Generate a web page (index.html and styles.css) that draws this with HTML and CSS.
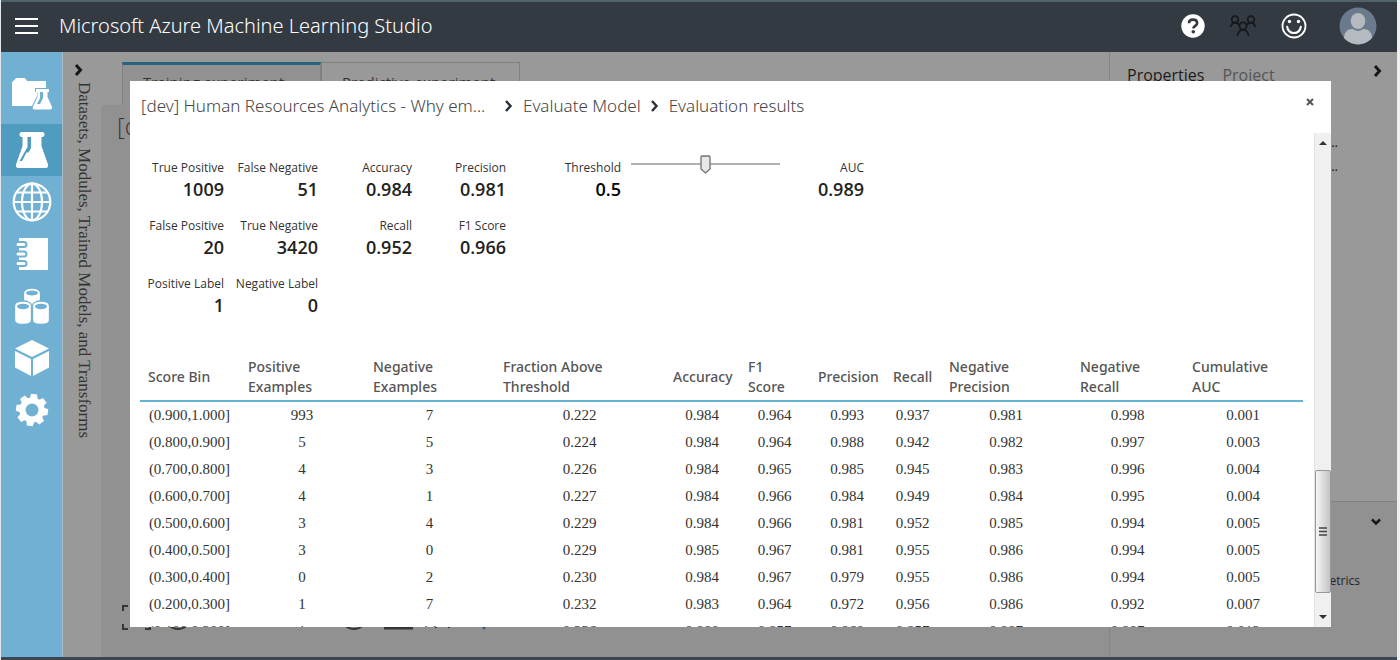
FILE: index.html
```html
<!DOCTYPE html>
<html lang="en">
<head>
    <meta charset="UTF-8">
    <meta name="viewport" content="width=device-width, initial-scale=1.0">
    <title>Microsoft Azure Machine Learning Studio</title>
    <link rel="stylesheet" href="styles.css">
</head>
<body>

<header class="topbar">
    <button class="icon-btn menu-btn" aria-label="Menu">
        <svg width="23" height="16" viewBox="0 0 23 16"><path d="M0 1h23M0 8h23M0 15h23" stroke="#fff" stroke-width="2"/></svg>
    </button>
    <h1>Microsoft Azure Machine Learning Studio</h1>
    <div class="topbar-actions">
        <button class="icon-btn" aria-label="Help">
            <svg width="24" height="24" viewBox="0 0 24 24"><circle cx="12" cy="12" r="11.7" fill="#fff"/><path d="M8 9.300C8 6.800 9.700 5.700 12 5.700s4.100 1.300 4.100 3.500c0 2.600-3.700 2.700-3.700 5.300" fill="none" stroke="#343a42" stroke-width="2.7"/><circle cx="12.3" cy="17.7" r="1.8" fill="#343a42"/></svg>
        </button>
        <button class="icon-btn" aria-label="Community">
            <svg width="26" height="22" viewBox="0 0 26 22" fill="none" stroke="#15181c" stroke-width="1.7"><circle cx="5" cy="4.5" r="3.3"/><circle cx="21" cy="4.5" r="3.3"/><circle cx="13" cy="11" r="3.6"/><path d="M1 12c.3-3 2-4.300 4-4.300 2.200 0 3.800 1.200 5 3M25 12c-.3-3-2-4.300-4-4.300-2.200 0-3.800 1.200-5 3M7.500 21c.4-4 2.500-6.200 5.500-6.200s5.100 2.200 5.500 6.200"/></svg>
        </button>
        <button class="icon-btn" aria-label="Feedback">
            <svg width="26" height="26" viewBox="0 0 26 26"><circle cx="13" cy="13" r="11.5" fill="none" stroke="#fff" stroke-width="1.8"/><circle cx="8.5" cy="8.5" r="1.7" fill="#fff"/><circle cx="17.5" cy="8.5" r="1.7" fill="#fff"/><path d="M6 13c.6 4.500 3.300 7 7 7s6.400-2.500 7-7" fill="none" stroke="#fff" stroke-width="2"/></svg>
        </button>
        <button class="icon-btn" aria-label="Account">
            <svg width="38" height="38" viewBox="0 0 38 38"><clipPath id="avatar"><circle cx="19" cy="19" r="18.5"/></clipPath><g clip-path="url(#avatar)"><path d="M0 0h38v38H0z" fill="#6b7a8c"/><path d="M5 38V31c0-5 3-9 8-9h12c5 0 8 4 8 9v7z" fill="#b4babf"/><ellipse cx="19" cy="14.5" rx="8.5" ry="9.5" fill="#6b7a8c"/><ellipse cx="19" cy="14" rx="7.3" ry="8" fill="#b4babf"/></g></svg>
        </button>
    </div>
</header>

<div class="workspace">
    <nav class="sidebar">
        <a href="#" aria-label="Projects">
            <svg width="42" height="34" viewBox="0 0 42 34"><path d="M1 29V5l2-1.500 2-2.500h9l2 3h19v7H24v4h2v4l-5 10z" fill="#fff"/><path d="M25 12h13v3h-1.500v5L41 30c.4 1.500-.3 2.500-2 2.500H23.500c-1.700 0-2.300-1-1.700-2.500L26.500 20v-5H25z" fill="#fff"/><path d="M29 15h3v6l-3 6h-3l3-6z" fill="#70b0d3"/></svg>
        </a>
        <a href="#" class="active" aria-label="Experiments">
            <svg width="34" height="38" viewBox="0 0 34 38"><path d="M4.500 3.500Q4.500 1 7 1h20q2.500 0 2.500 2.500T27 6h-.5v9l6.500 18.500q.8 3.500-3 3.500H4Q.2 37 1 33.500L7.500 15V6H7Q4.500 6 4.500 3.500z" fill="#fff"/><path d="M12.500 6H16v11l-2.500 4.500h-2L7 30H4.500l8-14z" fill="#4f9cc0"/></svg>
        </a>
        <a href="#" aria-label="Web services">
            <svg width="40" height="40" viewBox="0 0 40 40" fill="none" stroke="#fff" stroke-width="2.2"><circle cx="20" cy="20" r="18.3"/><ellipse cx="20" cy="20" rx="10" ry="18.3"/><path d="M20 1.500v37M1.500 20h37M5 10.500h30M5 29.500h30"/></svg>
        </a>
        <a href="#" aria-label="Notebooks">
            <svg width="32" height="34" viewBox="0 0 32 34"><path d="M3 1h29v32H3z" fill="#fff"/><path d="M0 4h8a3.500 3.500 0 0 1 0 7H0zM0 13.500h8a3.500 3.500 0 0 1 0 7H0zM0 23h8a3.500 3.500 0 0 1 0 7H0z" fill="#70b0d3"/><path d="M2 7.500h6M2 17h6M2 26.500h6" stroke="#fff" stroke-width="3" stroke-linecap="round"/></svg>
        </a>
        <a href="#" aria-label="Datasets">
            <svg width="36" height="38" viewBox="0 0 36 38"><g fill="#fff" stroke="#70b0d3" stroke-width="1.3"><path d="M9.500 6c0-3 4-5 8.500-5s8.500 2 8.500 5v11c0 3-4 4-8.500 4s-8.500-1-8.500-4z"/><path d="M.5 19c0-3.300 4-5 8.500-5s8.500 1.700 8.500 5v14c0 3.300-4 4.500-8.500 4.500S.5 36.300.5 33zM18.500 19c0-3.300 4-5 8.500-5s8.500 1.700 8.500 5v14c0 3.300-4 4.500-8.500 4.500s-8.500-1.200-8.500-4.500z"/></g><g fill="#70b0d3"><ellipse cx="18" cy="6" rx="6" ry="2.5"/><ellipse cx="9" cy="19.5" rx="6" ry="2.7"/><ellipse cx="27" cy="19.5" rx="6" ry="2.7"/></g></svg>
        </a>
        <a href="#" aria-label="Trained models">
            <svg width="36" height="38" viewBox="0 0 36 38" fill="#fff"><path d="M18 1l17 8.500L18 18 1 9.500zM1 12l16 8v17L1 28.500zM35 12l-16 8v17l16-8.500z"/></svg>
        </a>
        <a href="#" aria-label="Settings">
            <svg width="34" height="34" viewBox="-17 -17 34 34"><g fill="#fff" transform="rotate(8)"><circle r="12.5"/><path d="M-4-11l1-5h6l1 5zM-4 11l1 5h6l1-5z"/><path d="M-4-11l1-5h6l1 5zM-4 11l1 5h6l1-5z" transform="rotate(45)"/><path d="M-4-11l1-5h6l1 5zM-4 11l1 5h6l1-5z" transform="rotate(90)"/><path d="M-4-11l1-5h6l1 5zM-4 11l1 5h6l1-5z" transform="rotate(135)"/></g><circle r="6.5" fill="#70b0d3"/></svg>
        </a>
    </nav>

    <aside class="palette">
        <button class="icon-btn" aria-label="Expand palette">
            <svg width="10" height="12" viewBox="0 0 10 12"><path d="M2 1l4.500 5L2 11" fill="none" stroke="#15191e" stroke-width="3"/></svg>
        </button>
        <span class="palette-title">Datasets, Modules, Trained Models, and Transforms</span>
    </aside>

    <main class="canvas">
        <div class="tabs">
            <a href="#" class="tab active">Training experiment</a>
            <a href="#" class="tab">Predictive experiment</a>
        </div>
        <h2>[dev] Human Resources Analytics</h2>
        <div class="canvas-tools">
            <svg width="370" height="27" viewBox="0 0 370 27" fill="none" stroke="#363636" stroke-width="2"><path d="M6 3H1v5M1 21v5h5M23 26h5v-5M28 8V3h-5"/><circle cx="56" cy="14" r="12"/><circle cx="232" cy="14" r="12"/><path d="M262 25h29" stroke-width="3"/><path d="M314 22v3M327 22v3"/><path d="M360 21l2 4 2-4" stroke="#1f5c78"/></svg>
        </div>
    </main>

    <aside class="properties">
        <div class="properties-main">
            <div class="properties-tabs">
                <a href="#" class="active">Properties</a>
                <a href="#">Project</a>
                <button class="icon-btn" aria-label="Collapse properties">
                    <svg width="10" height="12" viewBox="0 0 10 12"><path d="M2 1l4.500 5L2 11" fill="none" stroke="#15191e" stroke-width="3"/></svg>
                </button>
            </div>
            <p>Azure Machine Learning ...</p>
            <p>Evaluation experiment ...</p>
        </div>
        <div class="quick-help">
            <button class="icon-btn" aria-label="Toggle quick help">
                <svg width="12" height="10" viewBox="0 0 12 10"><path d="M2 2.500l4 4 4-4" fill="none" stroke="#15191e" stroke-width="2.5"/></svg>
            </button>
            <p>Evaluation metrics</p>
        </div>
    </aside>
</div>

<div class="dialog" role="dialog" aria-label="Evaluation results">
    <div class="dialog-header">
        <nav class="breadcrumb">
            <a href="#" class="experiment">[dev] Human Resources Analytics - Why em...</a>
            <svg width="10" height="12" viewBox="0 0 10 12"><path d="M2 1l4.500 5L2 11" fill="none" stroke="#2b3138" stroke-width="2.5"/></svg>
            <a href="#">Evaluate Model</a>
            <svg width="10" height="12" viewBox="0 0 10 12"><path d="M2 1l4.500 5L2 11" fill="none" stroke="#2b3138" stroke-width="2.5"/></svg>
            <a href="#">Evaluation results</a>
        </nav>
        <button class="icon-btn" aria-label="Close">
            <svg width="8" height="8" viewBox="0 0 8 8"><path d="M1 1l6 6M7 1L1 7" stroke="#555" stroke-width="2"/></svg>
        </button>
    </div>

    <div class="dialog-body">
        <div class="results">
            <div class="summary">
                <dl class="metrics">
                    <div><dt>True Positive</dt><dd>1009</dd></div>
                    <div><dt>False Negative</dt><dd>51</dd></div>
                    <div><dt>Accuracy</dt><dd>0.984</dd></div>
                    <div><dt>Precision</dt><dd>0.981</dd></div>
                    <div><dt>False Positive</dt><dd>20</dd></div>
                    <div><dt>True Negative</dt><dd>3420</dd></div>
                    <div><dt>Recall</dt><dd>0.952</dd></div>
                    <div><dt>F1 Score</dt><dd>0.966</dd></div>
                    <div><dt>Positive Label</dt><dd>1</dd></div>
                    <div><dt>Negative Label</dt><dd>0</dd></div>
                </dl>
                <div class="threshold">
                    <label for="threshold">Threshold</label>
                    <output for="threshold">0.5</output>
                </div>
                <input type="range" id="threshold" min="0" max="1" step="0.01" value="0.5">
                <dl class="auc">
                    <div><dt>AUC</dt><dd>0.989</dd></div>
                </dl>
            </div>

            <table class="bins">
                <colgroup>
                    <col class="c-bin"><col class="c-pos"><col class="c-neg"><col class="c-frac"><col class="c-acc"><col class="c-f1">
                    <col class="c-prec"><col class="c-rec"><col class="c-nprec"><col class="c-nrec"><col class="c-auc">
                </colgroup>
                <thead>
                    <tr>
                        <th>Score Bin</th>
                        <th>Positive<br>Examples</th>
                        <th>Negative<br>Examples</th>
                        <th>Fraction Above<br>Threshold</th>
                        <th>Accuracy</th>
                        <th>F1<br>Score</th>
                        <th>Precision</th>
                        <th>Recall</th>
                        <th>Negative<br>Precision</th>
                        <th>Negative<br>Recall</th>
                        <th>Cumulative<br>AUC</th>
                    </tr>
                </thead>
                <tbody>
                    <tr><td>(0.900,1.000]</td><td>993</td><td>7</td><td>0.222</td><td>0.984</td><td>0.964</td><td>0.993</td><td>0.937</td><td>0.981</td><td>0.998</td><td>0.001</td></tr>
                    <tr><td>(0.800,0.900]</td><td>5</td><td>5</td><td>0.224</td><td>0.984</td><td>0.964</td><td>0.988</td><td>0.942</td><td>0.982</td><td>0.997</td><td>0.003</td></tr>
                    <tr><td>(0.700,0.800]</td><td>4</td><td>3</td><td>0.226</td><td>0.984</td><td>0.965</td><td>0.985</td><td>0.945</td><td>0.983</td><td>0.996</td><td>0.004</td></tr>
                    <tr><td>(0.600,0.700]</td><td>4</td><td>1</td><td>0.227</td><td>0.984</td><td>0.966</td><td>0.984</td><td>0.949</td><td>0.984</td><td>0.995</td><td>0.004</td></tr>
                    <tr><td>(0.500,0.600]</td><td>3</td><td>4</td><td>0.229</td><td>0.984</td><td>0.966</td><td>0.981</td><td>0.952</td><td>0.985</td><td>0.994</td><td>0.005</td></tr>
                    <tr><td>(0.400,0.500]</td><td>3</td><td>0</td><td>0.229</td><td>0.985</td><td>0.967</td><td>0.981</td><td>0.955</td><td>0.986</td><td>0.994</td><td>0.005</td></tr>
                    <tr><td>(0.300,0.400]</td><td>0</td><td>2</td><td>0.230</td><td>0.984</td><td>0.967</td><td>0.979</td><td>0.955</td><td>0.986</td><td>0.994</td><td>0.005</td></tr>
                    <tr><td>(0.200,0.300]</td><td>1</td><td>7</td><td>0.232</td><td>0.983</td><td>0.964</td><td>0.972</td><td>0.956</td><td>0.986</td><td>0.992</td><td>0.007</td></tr>
                    <tr><td>(0.100,0.200]</td><td>1</td><td>14</td><td>0.236</td><td>0.980</td><td>0.957</td><td>0.960</td><td>0.957</td><td>0.987</td><td>0.987</td><td>0.012</td></tr>
                </tbody>
            </table>
        </div>

        <div class="scrollbar">
            <button aria-label="Scroll up"><svg width="8" height="4" viewBox="0 0 8 4"><path d="M0 4l4-4 4 4z" fill="#333"/></svg></button>
            <div class="track-above"></div>
            <div class="thumb"><svg width="8" height="9" viewBox="0 0 8 9"><path d="M0 1h8M0 4.500h8M0 8h8" stroke="#444" stroke-width="1.3"/></svg></div>
            <div class="track-below"></div>
            <button aria-label="Scroll down"><svg width="8" height="4" viewBox="0 0 8 4"><path d="M0 0l4 4 4-4z" fill="#333"/></svg></button>
        </div>
    </div>
</div>

</body>
</html>
```

FILE: styles.css
```css
* {
    box-sizing: border-box;
}

body {
    display: flex;
    flex-direction: column;
    height: 100vh;
    margin: 0;
    overflow: hidden;
    font-family: "Open Sans", "Noto Sans", sans-serif;
    color: #333;
    background-color: #fff;
    border-left: 1px solid #e4e8ea;
    border-right: 3px solid #eef0f1;
}

h1, h2, p, dl, dd {
    margin: 0;
}

h1, h2 {
    font-weight: 300;
}

a {
    color: inherit;
    text-decoration: none;
}

svg {
    display: block;
}

.icon-btn {
    padding: 0;
    border: none;
    background: none;
    cursor: pointer;
}

/* Top bar */

.topbar {
    display: flex;
    align-items: center;
    flex: none;
    height: 52px;
    padding: 0 20px 2px 14px;
    color: #fff;
    background-color: #343a42;
    border-top: 2px solid #4f6468;
}

.topbar h1 {
    margin-left: 21px;
    font-family: "Noto Sans", sans-serif;
    font-size: 20px;
    line-height: 28px;
}

.topbar-actions {
    display: flex;
    align-items: center;
    gap: 25px;
    margin-left: auto;
}

.topbar-actions .icon-btn:last-child {
    margin-left: 7px;
}

/* Workspace behind the dialog */

.workspace {
    display: flex;
    flex: 1;
    min-height: 0;
    border-bottom: 3px solid #3c4754;
}

.sidebar {
    flex: none;
    width: 62px;
    padding-top: 16px;
    background-color: #70b0d3;
    border-right: 1px solid #a9bcc6;
}

.sidebar a {
    display: flex;
    align-items: center;
    justify-content: center;
    height: 52px;
}

.sidebar a:first-child {
    margin-bottom: 4px;
}

.sidebar a.active {
    background-color: #4f9cc0;
}

.palette {
    display: flex;
    flex-direction: column;
    align-items: flex-end;
    gap: 6px;
    flex: none;
    width: 38px;
    padding: 12px 7px 0 0;
    background-color: #999;
}

.palette .icon-btn {
    margin-right: 10px;
}

.palette-title {
    writing-mode: vertical-rl;
    font-family: "Liberation Serif", serif;
    font-size: 17px;
    line-height: 20px;
    color: #333;
    white-space: nowrap;
}

.canvas {
    display: flex;
    flex-direction: column;
    flex: 1;
    min-width: 0;
    background-color: #919191;
}

.tabs {
    display: flex;
    height: 53px;
    padding: 10px 0 0 21px;
    background-color: #999;
}

.tab {
    width: 199px;
    padding: 8px 20px 0;
    font-size: 15px;
    line-height: 22px;
    border: 1px solid #808080;
    border-bottom: none;
    white-space: nowrap;
}

.tab.active {
    padding-top: 6px;
    background-color: #919191;
    border-top: 3px solid #266580;
}

.canvas h2 {
    padding: 5px 16px;
    font-size: 24px;
    line-height: 32px;
}

.canvas-tools {
    margin-top: auto;
    padding: 0 21px 27px;
}

.properties {
    display: flex;
    flex-direction: column;
    flex: none;
    width: 288px;
    border-left: 1px solid #858585;
    background-color: #999;
}

.properties-main {
    flex: 1;
    padding: 11px 14px 0 17px;
}

.properties-main p {
    width: 211px;
    font-size: 13px;
    line-height: 24px;
    text-align: right;
    white-space: nowrap;
    color: #111;
}

.properties-tabs {
    display: flex;
    gap: 18px;
    margin-bottom: 43px;
    font-size: 16px;
    line-height: 24px;
    color: #555;
}

.properties-tabs .active {
    color: #1c1c1c;
}

.properties-tabs .icon-btn {
    height: 16px;
    margin-left: auto;
}

.quick-help {
    display: flex;
    flex-direction: column;
    gap: 44px;
    height: 156px;
    padding: 15px 15px 0;
    background-color: #919191;
    border-top: 1px solid #828282;
}

.quick-help .icon-btn {
    align-self: flex-end;
}

.quick-help p {
    width: 235px;
    font-size: 12px;
    line-height: 20px;
    text-align: right;
    color: #222;
}

/* Dialog */

.dialog {
    position: fixed;
    top: 81px;
    right: 69px;
    bottom: 33px;
    left: 130px;
    display: flex;
    flex-direction: column;
    background-color: #fff;
}

.dialog-header {
    display: flex;
    align-items: flex-start;
    justify-content: space-between;
    flex: none;
    height: 52px;
    padding: 12px 17px 0 11px;
}

.dialog-header .icon-btn {
    margin-top: 5px;
}

.breadcrumb {
    display: flex;
    align-items: center;
    gap: 9px;
    font-family: "Noto Sans", sans-serif;
    font-size: 17px;
    font-weight: 300;
    line-height: 26px;
    color: #444;
}

.breadcrumb .experiment {
    min-width: 354px;
}

.dialog-body {
    display: flex;
    flex: 1;
    min-height: 0;
}

.results {
    flex: 1;
    min-width: 0;
    padding: 26px 11px 0 10px;
    overflow: hidden;
}

.summary {
    display: flex;
    align-items: flex-start;
    height: 198px;
}

.metrics {
    display: grid;
    grid-template-columns: 84px 94px 94px 94px;
    row-gap: 16px;
}

.metrics, .auc, .threshold {
    font-size: 12px;
    line-height: 18px;
    text-align: right;
    white-space: nowrap;
}

.summary dd, .summary output {
    display: block;
    font-size: 18px;
    font-weight: 600;
    line-height: 24px;
    color: #222;
}

.threshold {
    width: 115px;
}

.summary .threshold output {
    color: #000;
}

.auc {
    width: 84px;
}

.summary input {
    width: 149px;
    height: 10px;
    margin: 0 0 0 10px;
    appearance: none;
    background: none;
}

.summary input::-webkit-slider-runnable-track {
    height: 2px;
    background-color: #b0b0b0;
}

.summary input::-webkit-slider-thumb {
    width: 11px;
    height: 19px;
    margin-top: -8px;
    appearance: none;
    background: url("data:image/svg+xml,%3Csvg xmlns='http://www.w3.org/2000/svg' width='11' height='19'%3E%3Cpath d='M1 2q0-1 1-1h7q1 0 1 1v12l-4.500 4L1 14z' fill='%23e8e8e8' stroke='%23707070' stroke-width='1.3'/%3E%3C/svg%3E") no-repeat;
}

.bins {
    width: 100%;
    table-layout: fixed;
    border-spacing: 0;
}

.c-bin { width: 100px; }
.c-pos { width: 125px; }
.c-neg { width: 130px; }
.c-frac { width: 170px; }
.c-acc { width: 75px; }
.c-f1 { width: 70px; }
.c-prec { width: 75px; }
.c-rec { width: 56px; }
.c-nprec { width: 131px; }
.c-nrec { width: 112px; }
.c-auc { width: 119px; }

.bins th {
    padding: 0 0 3px 8px;
    font-family: "Noto Sans", sans-serif;
    font-size: 14px;
    font-weight: 500;
    line-height: 20px;
    text-align: left;
    white-space: nowrap;
    color: #555;
    border-bottom: 2px solid #63b3d3;
}

.bins td {
    height: 27px;
    padding: 0 1px 0 0;
    font-family: "Liberation Serif", serif;
    font-size: 15px;
    text-align: center;
    color: #333;
}

/* Scrollbar */

.scrollbar {
    display: flex;
    flex-direction: column;
    flex: none;
    width: 17px;
    background-color: #f0f0f0;
    border-left: 1px solid #e2e2e2;
}

.scrollbar button {
    display: flex;
    align-items: center;
    justify-content: center;
    height: 20px;
    padding: 0;
    border: none;
    background: none;
}

.track-above {
    flex: 318;
}

.thumb {
    display: flex;
    align-items: center;
    justify-content: center;
    flex: 122;
    background: linear-gradient(to right, #f5f5f5, #dcdcde 50%, #c4c4c8);
    border: 1px solid #979797;
    border-radius: 2px;
}

.track-below {
    flex: 14;
}
```
